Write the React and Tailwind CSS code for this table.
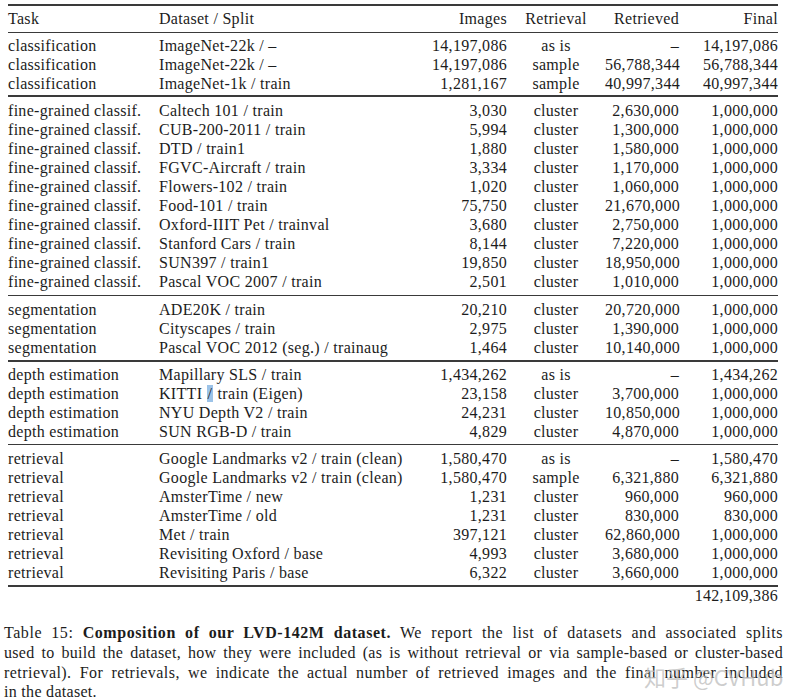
const groups = [
  {
    pt: 'pt-[3px]',
    pb: 'pb-[2px]',
    rows: [
      ['classification', 'ImageNet-22k / –', '14,197,086', 'as is', '–', '14,197,086'],
      ['classification', 'ImageNet-22k / –', '14,197,086', 'sample', '56,788,344', '56,788,344'],
      ['classification', 'ImageNet-1k / train', '1,281,167', 'sample', '40,997,344', '40,997,344'],
    ],
  },
  {
    pt: 'pt-[4px]',
    pb: 'pb-[4px]',
    rows: [
      ['fine-grained classif.', 'Caltech 101 / train', '3,030', 'cluster', '2,630,000', '1,000,000'],
      ['fine-grained classif.', 'CUB-200-2011 / train', '5,994', 'cluster', '1,300,000', '1,000,000'],
      ['fine-grained classif.', 'DTD / train1', '1,880', 'cluster', '1,580,000', '1,000,000'],
      ['fine-grained classif.', 'FGVC-Aircraft / train', '3,334', 'cluster', '1,170,000', '1,000,000'],
      ['fine-grained classif.', 'Flowers-102 / train', '1,020', 'cluster', '1,060,000', '1,000,000'],
      ['fine-grained classif.', 'Food-101 / train', '75,750', 'cluster', '21,670,000', '1,000,000'],
      ['fine-grained classif.', 'Oxford-IIIT Pet / trainval', '3,680', 'cluster', '2,750,000', '1,000,000'],
      ['fine-grained classif.', 'Stanford Cars / train', '8,144', 'cluster', '7,220,000', '1,000,000'],
      ['fine-grained classif.', 'SUN397 / train1', '19,850', 'cluster', '18,950,000', '1,000,000'],
      ['fine-grained classif.', 'Pascal VOC 2007 / train', '2,501', 'cluster', '1,010,000', '1,000,000'],
    ],
  },
  {
    pt: 'pt-[4px]',
    pb: 'pb-[3px]',
    rows: [
      ['segmentation', 'ADE20K / train', '20,210', 'cluster', '20,720,000', '1,000,000'],
      ['segmentation', 'Cityscapes / train', '2,975', 'cluster', '1,390,000', '1,000,000'],
      ['segmentation', 'Pascal VOC 2012 (seg.) / trainaug', '1,464', 'cluster', '10,140,000', '1,000,000'],
    ],
  },
  {
    pt: 'pt-[3px]',
    pb: 'pb-[3px]',
    rows: [
      ['depth estimation', 'Mapillary SLS / train', '1,434,262', 'as is', '–', '1,434,262'],
      ['depth estimation', 'KITTI', '23,158', 'cluster', '3,700,000', '1,000,000'],
      ['depth estimation', 'NYU Depth V2 / train', '24,231', 'cluster', '10,850,000', '1,000,000'],
      ['depth estimation', 'SUN RGB-D / train', '4,829', 'cluster', '4,870,000', '1,000,000'],
    ],
  },
  {
    pt: 'pt-[4px]',
    pb: 'pb-[3px]',
    rows: [
      ['retrieval', 'Google Landmarks v2 / train (clean)', '1,580,470', 'as is', '–', '1,580,470'],
      ['retrieval', 'Google Landmarks v2 / train (clean)', '1,580,470', 'sample', '6,321,880', '6,321,880'],
      ['retrieval', 'AmsterTime / new', '1,231', 'cluster', '960,000', '960,000'],
      ['retrieval', 'AmsterTime / old', '1,231', 'cluster', '830,000', '830,000'],
      ['retrieval', 'Met / train', '397,121', 'cluster', '62,860,000', '1,000,000'],
      ['retrieval', 'Revisiting Oxford / base', '4,993', 'cluster', '3,680,000', '1,000,000'],
      ['retrieval', 'Revisiting Paris / base', '6,322', 'cluster', '3,660,000', '1,000,000'],
    ],
  },
];

const cols = 'grid grid-cols-[151px_260px_88px_98px_74px_99px]';

function Row({ cells }) {
  const [task, dataset, images, retrieval, retrieved, final] = cells;
  return (
    <div className={`${cols} h-[19px] items-center leading-[19px]`}>
      <span>{task}</span>
      <span className="whitespace-nowrap">
        {dataset === 'KITTI' ? (
          <>
            KITTI <span className="bg-[#9cc3e8] px-[1px]">/</span> train (Eigen)
          </>
        ) : (
          dataset
        )}
      </span>
      <span className="text-right">{images}</span>
      <span className="text-center">{retrieval}</span>
      <span className="text-right">{retrieved}</span>
      <span className="text-right">{final}</span>
    </div>
  );
}

export default function App() {
  return (
    <div
      className="relative w-[787px] h-[699px] bg-white text-[#1c1c1c] text-[16px] tracking-[0.3px] overflow-hidden"
      style={{ fontFamily: '"Liberation Serif", "Times New Roman", serif' }}
    >
      {/* Table */}
      <div className="ml-[8px] w-[770px] pt-[4px]">
        <div className="h-[2px] bg-[#3a3a3a]" />
        <div className={`${cols} h-[26px] items-center`}>
          <span>Task</span>
          <span>Dataset / Split</span>
          <span className="text-right">Images</span>
          <span className="text-center">Retrieval</span>
          <span className="text-right">Retrieved</span>
          <span className="text-right">Final</span>
        </div>
        {groups.map((g, i) => (
          <div key={i}>
            <div className={i === 0 ? 'h-px bg-[#3a3a3a]' : 'h-[1.5px] bg-[#3a3a3a]'} />
            <div className={`${g.pt} ${g.pb}`}>
              {g.rows.map((r, j) => (
                <Row key={j} cells={r} />
              ))}
            </div>
          </div>
        ))}
        <div className="h-[2px] bg-[#3a3a3a]" />
        <div className="h-[18px] leading-[18px] text-right">142,109,386</div>
      </div>

      {/* Caption */}
      <div className="ml-[4px] w-[779px] mt-[18px] leading-[20px]">
        <p className="text-justify [text-align-last:justify] whitespace-nowrap tracking-[0.55px]">
          Table 15: <b>Composition of our LVD-142M dataset.</b> We report the list of datasets and associated splits
        </p>
        <p className="text-justify [text-align-last:justify] whitespace-nowrap">
          used to build the dataset, how they were included (as is without retrieval or via sample-based or cluster-based
        </p>
        <p className="text-justify [text-align-last:justify] whitespace-nowrap tracking-[0.45px]">
          retrieval). For retrievals, we indicate the actual number of retrieved images and the final number included
        </p>
        <p className="leading-[18px]">in the dataset.</p>
      </div>

      {/* Watermark */}
      <div
        className="absolute left-[644px] top-[660px] text-[22px] tracking-normal text-[#bdbdbd]/75 whitespace-nowrap"
        style={{ fontFamily: '"Noto Sans CJK SC", "Noto Sans", sans-serif' }}
      >
        知乎 @CVHub
      </div>
    </div>
  );
}
